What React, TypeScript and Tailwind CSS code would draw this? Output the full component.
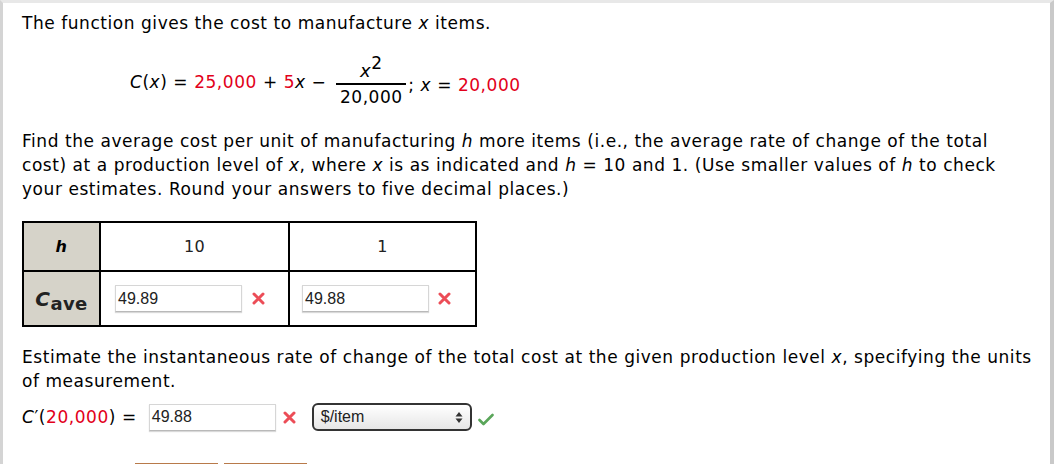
import React from "react"

const RED = "text-[#e2001a]"

function CrossMark() {
  return (
    <svg width="13" height="13" viewBox="0 0 13 13" className="inline-block">
      <path d="M2 2 L11 11 M11 2 L2 11" stroke="#ec4d57" strokeWidth="3" strokeLinecap="round" />
    </svg>
  )
}

function CheckMark() {
  return (
    <svg width="16" height="13" viewBox="0 0 16 13" className="inline-block">
      <path d="M1.5 7 L5.5 11 L14.5 2" stroke="#5aa65a" strokeWidth="2.6" fill="none" strokeLinecap="round" strokeLinejoin="round" />
    </svg>
  )
}

function AnswerBox({ value }: { value: string }) {
  return (
    <div className="w-[127px] h-[27px] shrink-0 border border-[#d6d6d6] border-b-[#b9b9b9] bg-white flex items-center px-[2px] text-[16px] tracking-normal text-[#222] font-['Liberation_Sans',Arial,sans-serif] shadow-[0_1px_1px_rgba(0,0,0,0.15)]">
      {value}
    </div>
  )
}

export default function App() {
  return (
    <div className="w-[1054px] h-[464px] overflow-hidden bg-white font-['DejaVu_Sans',Verdana,sans-serif] text-[17px] tracking-[0.55px] leading-[24px] text-black">
      <div className="h-full border-t-[3px] border-t-[#e8e8e8] border-l-[3px] border-l-[#d4d4d4] border-r-[4px] border-r-[#c9c9c9] w-[1054px] pl-[19px] pt-[8px]">
        <p>
          The function gives the cost to manufacture <i>x</i> items.
        </p>

        {/* formula */}
        <div className="mt-[22px] ml-[108px] flex items-center h-[54px]">
          <span className="-translate-y-[2px]">
            <i>C</i>(<i>x</i>) = <span className={RED}>25,000</span> + <span className={RED}>5</span>
            <i>x</i> −&nbsp;
          </span>
          <span className="inline-flex flex-col items-center ml-[4px] mr-[2px]">
            <span className="px-[2px] leading-[24px] text-[18px]">
              <i>x</i>
              <sup className="text-[17px] relative -top-[8px]">2</sup>
            </span>
            <span className="h-[2px] w-[70px] bg-black" />
            <span className="leading-[24px]">20,000</span>
          </span>
          <span className="translate-y-[1px]">
            ; <i>x</i> = <span className={RED}>20,000</span>
          </span>
        </div>

        <p className="mt-[18px] w-[1015px]">
          Find the average cost per unit of manufacturing <i>h</i> more items (i.e., the average rate of change of the total
          <br />
          cost) at a production level of <i>x</i>, where <i>x</i> is as indicated and <i>h</i> = 10 and 1. (Use smaller values of <i>h</i> to check
          <br />
          your estimates. Round your answers to five decimal places.)
        </p>

        {/* table */}
        <div className="mt-[20px] w-[455px] border-2 border-black grid grid-cols-[77px_189px_185px] text-[16px] tracking-[0.4px]">
          <div className="h-[49px] bg-[#d6d3c9] border-r-2 border-b-2 border-black flex items-center justify-center font-bold italic">
            h
          </div>
          <div className="h-[49px] border-r-2 border-b-2 border-black flex items-center justify-center text-[#222]">
            10
          </div>
          <div className="h-[49px] border-b-2 border-black flex items-center justify-center text-[#222]">
            1
          </div>
          <div className="h-[53px] bg-[#d6d3c9] border-r-2 border-black flex items-center justify-center font-bold text-[#222]">
            <span className="text-[20px] italic">C</span>
            <span className="text-[18px] relative top-[5px]">ave</span>
          </div>
          <div className="h-[53px] border-r-2 border-black flex items-center pl-[14px] gap-[10px]">
            <AnswerBox value="49.89" />
            <CrossMark />
          </div>
          <div className="h-[53px] flex items-center pl-[12px] gap-[9px]">
            <AnswerBox value="49.88" />
            <CrossMark />
          </div>
        </div>

        <p className="mt-[18px] w-[1015px]">
          Estimate the instantaneous rate of change of the total cost at the given production level <i>x</i>, specifying the units
          <br />
          of measurement.
        </p>

        <div className="mt-[10px] flex items-center h-[28px]">
          <span>
            <i>C</i>′(<span className={RED}>20,000</span>) =
          </span>
          <div className="ml-[12px]">
            <AnswerBox value="49.88" />
          </div>
          <span className="ml-[7px] flex">
            <CrossMark />
          </span>
          <div className="ml-[16px] w-[160px] h-[28px] rounded-[6px] border-2 border-[#333] bg-gradient-to-b from-white to-[#e6e6e6] flex items-center justify-between pl-[7px] pr-[7px] font-['Liberation_Sans',Arial,sans-serif] text-[16px] tracking-normal text-[#222]">
            <span>$/item</span>
            <svg width="8" height="13" viewBox="0 0 8 13">
              <path d="M4 1 L7.5 5.5 L0.5 5.5 Z M4 12 L7.5 7.5 L0.5 7.5 Z" fill="#333" />
            </svg>
          </div>
          <span className="ml-[6px] translate-y-[2px] flex">
            <CheckMark />
          </span>
        </div>

        <div className="mt-[32px] ml-[113px] flex gap-[6px]">
          <div className="w-[83px] h-[10px] border-t-2 border-[#b87a4a]" />
          <div className="w-[83px] h-[10px] border-t-2 border-[#b87a4a]" />
        </div>
      </div>
    </div>
  )
}
